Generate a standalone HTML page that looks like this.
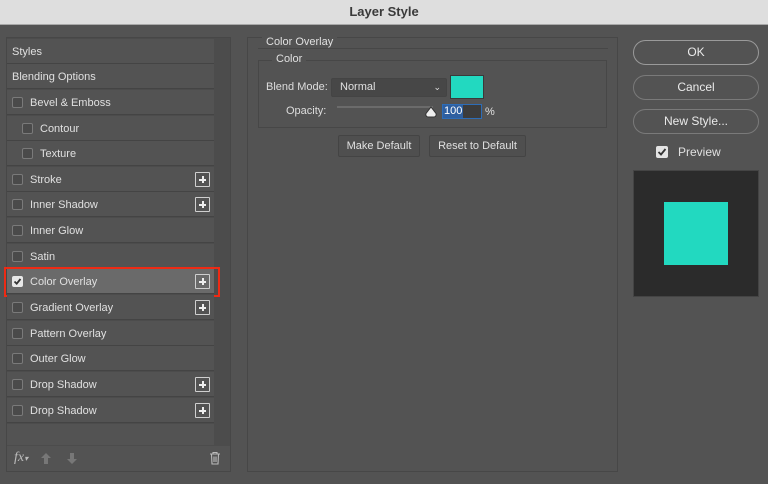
<!DOCTYPE html>
<html><head><style>
*{box-sizing:border-box;margin:0;padding:0}
body{width:768px;height:484px;background:#535353;font-family:"Liberation Sans",sans-serif;color:#e0e0e0;position:relative;overflow:hidden;font-size:11px}
.abs{position:absolute}
.title{left:0;top:0;width:768px;height:25px;background:#dedede;border-bottom:1px solid #a8a8a8;color:#3a3a3a;font-weight:bold;font-size:13px;text-align:center;line-height:24px}
.lp{left:6px;top:37px;width:225px;height:435px;border:1px solid #474747;background:#4c4c4c}
.row{position:absolute;left:7px;width:207px;height:25px;background:#535353;border-bottom:1px solid #444;line-height:26px;font-size:11px}
.cb{position:absolute;top:7px;width:11px;height:11px;border:1px solid #7a7a7a;border-radius:2px;background:#4a4a4a}
.plus{position:absolute;right:4px;top:5px;width:15px;height:15px;border:1px solid #cfcfcf;border-radius:1px}
.plus:before{content:"";position:absolute;left:3px;top:6px;width:7px;height:1.5px;background:#eee}
.plus:after{content:"";position:absolute;left:6px;top:3px;width:1.5px;height:7px;background:#eee}
.mp{left:247px;top:37px;width:371px;height:435px;border:1px solid #474747}
.btn{position:absolute;left:633px;width:126px;height:25px;border:1.5px solid #7a7a7a;border-radius:13px;text-align:center;line-height:22px;font-size:12px;color:#eaeaea}
.pb{position:absolute;height:22px;border:1px solid #444;background:#4f4f4f;border-radius:2px;text-align:center;line-height:20px;font-size:11px}
</style></head><body>
<div class="abs title">Layer Style</div>
<div class="abs lp"></div>
<div class="row" style="top:39px;padding-left:5px">Styles</div>
<div class="row" style="top:64px;padding-left:5px">Blending Options</div>
<div class="row" style="top:90px"><div class="cb" style="left:5px"></div><span style="margin-left:23px">Bevel &amp; Emboss</span></div>
<div class="row" style="top:116px"><div class="cb" style="left:15px"></div><span style="margin-left:33px">Contour</span></div>
<div class="row" style="top:141px"><div class="cb" style="left:15px"></div><span style="margin-left:33px">Texture</span></div>
<div class="row" style="top:167px"><div class="cb" style="left:5px"></div><span style="margin-left:23px">Stroke</span><div class="plus"></div></div>
<div class="row" style="top:192px"><div class="cb" style="left:5px"></div><span style="margin-left:23px">Inner Shadow</span><div class="plus"></div></div>
<div class="row" style="top:218px"><div class="cb" style="left:5px"></div><span style="margin-left:23px">Inner Glow</span></div>
<div class="row" style="top:244px"><div class="cb" style="left:5px"></div><span style="margin-left:23px">Satin</span></div>
<div class="row" style="top:269px;background:#6a6a6a"><div class="cb" style="left:5px;background:#e8e8e8;border-color:#e8e8e8"><svg width="9" height="9" viewBox="0 0 9 9" style="position:absolute;left:0;top:0"><path d="M1.5 4.5L3.7 6.7L7.5 2" stroke="#333" stroke-width="1.8" fill="none"/></svg></div><span style="margin-left:23px">Color Overlay</span><div class="plus"></div></div>
<div class="abs" style="left:4px;top:267px;width:216px;height:30px;border:2.5px solid #ee2a14"></div>
<div class="row" style="top:295px"><div class="cb" style="left:5px"></div><span style="margin-left:23px">Gradient Overlay</span><div class="plus"></div></div>
<div class="row" style="top:321px"><div class="cb" style="left:5px"></div><span style="margin-left:23px">Pattern Overlay</span></div>
<div class="row" style="top:346px"><div class="cb" style="left:5px"></div><span style="margin-left:23px">Outer Glow</span></div>
<div class="row" style="top:372px"><div class="cb" style="left:5px"></div><span style="margin-left:23px">Drop Shadow</span><div class="plus"></div></div>
<div class="row" style="top:398px"><div class="cb" style="left:5px"></div><span style="margin-left:23px">Drop Shadow</span><div class="plus"></div></div>
<div class="abs" style="left:7px;top:424px;width:207px;height:21px;background:#535353"></div>
<div class="abs" style="left:7px;top:446px;width:223px;height:25px;background:#535353"></div>
<div class="abs" style="left:14px;top:450px;font-style:italic;font-size:14px;color:#bbb;font-family:'Liberation Serif',serif">fx<span style="font-size:8px">▾</span></div>
<svg class="abs" style="left:40px;top:452px" width="12" height="13"><path d="M6 1L11 6H8V12H4V6H1Z" fill="#777"/></svg>
<svg class="abs" style="left:66px;top:452px" width="12" height="13"><path d="M6 12L11 7H8V1H4V7H1Z" fill="#777"/></svg>
<svg class="abs" style="left:209px;top:451px" width="12" height="14"><path d="M1 3H11M4 3V1.5H8V3M2.5 3.5L3 13H9L9.5 3.5M5 5.5V11M7 5.5V11" stroke="#bbb" stroke-width="1.1" fill="none"/></svg>
<div class="abs mp"></div>
<div class="abs" style="left:258px;top:48px;width:350px;height:1px;background:#474747"></div>
<div class="abs" style="left:262px;top:36px;padding:0 4px;background:#535353;font-size:11px">Color Overlay</div>
<div class="abs" style="left:258px;top:60px;width:349px;height:68px;border:1px solid #474747"></div>
<div class="abs" style="left:272px;top:53px;padding:0 4px;background:#535353;font-size:11px">Color</div>
<div class="abs" style="left:266px;top:81px;font-size:11px;color:#ddd">Blend Mode:</div>
<div class="abs" style="left:331px;top:78px;width:116px;height:19px;background:#474747;border:1px solid #444;border-radius:2px;padding-left:8px;line-height:17px;font-size:11px">Normal<span style="position:absolute;right:5px;top:0;font-size:9px">⌄</span></div>
<div class="abs" style="left:450px;top:75px;width:34px;height:24px;background:#22d9c0;border:1px solid #3a3a3a"></div>
<div class="abs" style="left:286px;top:105px;font-size:11px;color:#ddd">Opacity:</div>
<div class="abs" style="left:337px;top:106px;width:96px;height:2px;background:#6b6b6b"></div>
<svg class="abs" style="left:424px;top:106px" width="14" height="12"><path d="M7 1L12 7.5A2.5 2.5 0 0 1 10 11H4A2.5 2.5 0 0 1 2 7.5Z" fill="#eee" stroke="#333"/></svg>
<div class="abs" style="left:442px;top:104px;width:40px;height:15px;background:#3c3c3c;border:1px solid #2d6db8"><span style="background:#2e5fa0;color:#fff;padding:0 1px;font-size:11px;line-height:13px;display:inline-block">100</span></div>
<div class="abs" style="left:485px;top:106px;font-size:11px">%</div>
<div class="pb" style="left:338px;top:135px;width:82px">Make Default</div>
<div class="pb" style="left:429px;top:135px;width:97px">Reset to Default</div>
<div class="btn" style="top:40px;border-color:#9a9a9a">OK</div>
<div class="btn" style="top:75px">Cancel</div>
<div class="btn" style="top:109px">New Style...</div>
<div class="abs" style="left:656px;top:146px;width:12px;height:12px;background:#e4e4e4;border-radius:2px"><svg width="12" height="12"><path d="M2.5 6L5 8.5L9.5 3" stroke="#333" stroke-width="1.8" fill="none"/></svg></div>
<div class="abs" style="left:678px;top:145px;font-size:12px">Preview</div>
<div class="abs" style="left:633px;top:170px;width:126px;height:127px;background:#2b2b2b;border:1px solid #444"></div>
<div class="abs" style="left:664px;top:202px;width:64px;height:63px;background:#22d9c0"></div>
</body></html>
